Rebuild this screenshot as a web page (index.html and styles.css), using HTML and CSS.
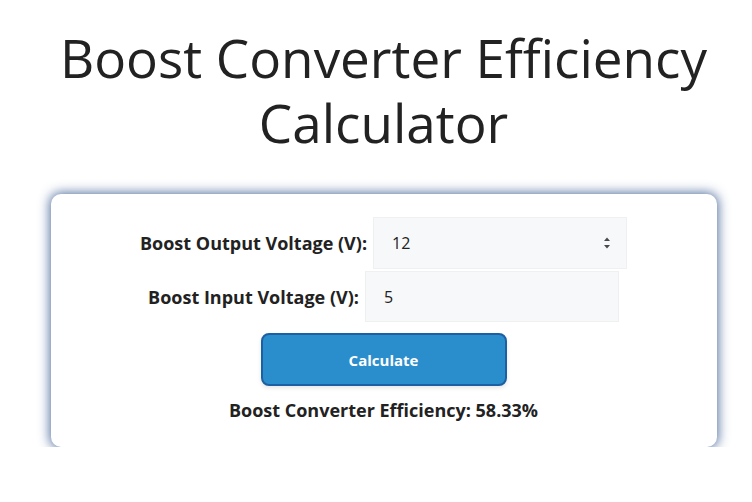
FILE: index.html
```html
<!DOCTYPE html>
<html lang="en">
<head>
    <meta charset="UTF-8">
    <meta name="viewport" content="width=device-width, initial-scale=1.0">
    <title>Boost Converter Efficiency Calculator</title>
    <link rel="stylesheet" href="styles.css">
</head>
<body>
    <h1>Boost Converter Efficiency Calculator</h1>
    <div class="container">
        <form id="calcForm">
            <div class="row">
                <label for="vout">Boost Output Voltage (V):</label>
                <div class="field field-out">
                    <input type="text" id="vout" name="vout" value="12">
                    <svg class="spinner" width="8" height="14" viewBox="0 0 8 14">
                        <path d="M4 1.5 L7 5 L1 5 Z" fill="#4a4a4a"/>
                        <path d="M4 12.5 L7 9 L1 9 Z" fill="#4a4a4a"/>
                    </svg>
                </div>
            </div>
            <div class="row">
                <label for="vin">Boost Input Voltage (V):</label>
                <div class="field field-in">
                    <input type="text" id="vin" name="vin" value="5">
                </div>
            </div>
            <button type="submit">Calculate</button>
        </form>
        <div id="result">Boost Converter Efficiency: 58.33%</div>
    </div>

    <script>
        const form = document.getElementById('calcForm');
        const result = document.getElementById('result');

        form.addEventListener('submit', function(e) {
            e.preventDefault();
            const vout = parseFloat(form.vout.value);
            const vin = parseFloat(form.vin.value);
            if (isNaN(vout) || isNaN(vin) || vout === 0) {
                result.textContent = 'Please enter valid voltages';
                return;
            }
            const eff = (1 - (vout - vin) / vout) * 100;
            result.textContent = 'Boost Converter Efficiency: ' + eff.toFixed(2) + '%';
        });
    </script>
</body>
</html>
```

FILE: styles.css
```css
body {
    font-family: "Open Sans", "Noto Sans", sans-serif;
    margin: 0;
    padding: 0 0 0 15px;
    background-color: #fff;
    color: #222;
}
h1 {
    font-size: 53px;
    font-weight: 400;
    line-height: 65px;
    text-align: center;
    margin: 25px 0 39px;
    color: #222;
}
.container {
    width: 666px;
    margin: 0 auto;
    box-sizing: border-box;
    background-color: #fff;
    padding: 23px 20px 25px;
    border-radius: 10px;
    box-shadow: 0 0 12px 1px rgba(55, 90, 145, 0.9);
}
form {
    display: flex;
    flex-direction: column;
    align-items: center;
}
.row {
    display: flex;
    align-items: center;
    justify-content: center;
    gap: 6px;
    margin-bottom: 2px;
}
label {
    font-size: 18px;
    font-weight: 700;
    color: #222;
}
.field {
    display: flex;
    align-items: center;
    width: 254px;
    height: 52px;
    box-sizing: border-box;
    padding: 0 18px;
    background-color: #f7f8f9;
    border: 1px solid #eef0f2;
}
.field-in {
    height: 51px;
}
.field input {
    flex: 1;
    min-width: 0;
    border: none;
    background: transparent;
    font-family: inherit;
    font-size: 16px;
    color: #222;
    padding: 0;
    outline: none;
}
.spinner {
    margin-right: -3px;
}
button {
    width: 246px;
    height: 53px;
    margin-top: 9px;
    background-color: #2a8dcc;
    color: #fff;
    font-family: inherit;
    font-size: 15px;
    font-weight: 700;
    border: 2px solid #1d5fa3;
    border-radius: 8px;
    box-shadow: 0 2px 4px rgba(0,0,0,0.1);
    cursor: pointer;
}
button:hover {
    background-color: #247fba;
}
#result {
    text-align: center;
    font-size: 18px;
    font-weight: 700;
    margin-top: 12px;
    color: #222;
}
```
